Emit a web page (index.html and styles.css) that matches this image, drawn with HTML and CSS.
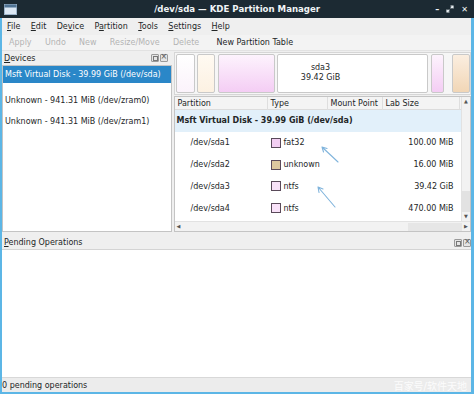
FILE: index.html
```html
<!DOCTYPE html>
<html lang="en">

<head>
    <meta charset="UTF-8">
    <title>/dev/sda — KDE Partition Manager</title>
    <link rel="stylesheet" href="styles.css">
</head>

<body>
    <div class="screen">
        <header class="titlebar">
            <svg class="app-icon" width="13" height="11" viewBox="0 0 13 11">
                <rect x="0.5" y="0.5" width="12" height="10" fill="#dce8f4" stroke="#9fb6cc" />
                <rect x="0.5" y="0.5" width="12" height="3" fill="#4f7394" />
            </svg>
            <span class="title">/dev/sda — KDE Partition Manager</span>
            <div class="win-controls">
                <span>–</span>
                <svg width="8" height="8" viewBox="0 0 8 8">
                    <path d="M4.5 1 H7 V3.5 M7 1 L4.6 3.4 M3.5 7 H1 V4.5 M1 7 L3.4 4.6" fill="none" stroke="#e8eef2" stroke-width="1.2" />
                </svg>
                <span class="close">✕</span>
            </div>
        </header>

        <div class="app">
            <nav class="menubar">
                <span><u>F</u>ile</span>
                <span><u>E</u>dit</span>
                <span>De<u>v</u>ice</span>
                <span>P<u>a</u>rtition</span>
                <span><u>T</u>ools</span>
                <span><u>S</u>ettings</span>
                <span><u>H</u>elp</span>
            </nav>

            <div class="toolbar">
                <span class="tool disabled">Apply</span>
                <span class="tool disabled">Undo</span>
                <span class="tool disabled">New</span>
                <span class="tool disabled">Resize/Move</span>
                <span class="tool disabled">Delete</span>
                <span class="tool">New Partition Table</span>
            </div>

            <div class="workspace">
                <!-- Devices dock -->
                <section class="devices">
                    <div class="dock-title">
                        <span><u>D</u>evices</span>
                        <div class="dock-btns">
                            <span class="dock-btn float"></span>
                            <span class="dock-btn close"></span>
                        </div>
                    </div>
                    <ul class="device-list">
                        <li class="selected">Msft Virtual Disk - 39.99 GiB (/dev/sda)</li>
                        <li>Unknown - 941.31 MiB (/dev/zram0)</li>
                        <li>Unknown - 941.31 MiB (/dev/zram1)</li>
                    </ul>
                </section>

                <!-- Partition view -->
                <section class="partview">
                    <div class="partbar">
                        <div class="seg seg-white" style="width: 19px"></div>
                        <div class="seg seg-beige" style="width: 18px"></div>
                        <div class="seg seg-pink" style="width: 57px"></div>
                        <div class="seg seg-main" style="width: 151px">
                            <span>sda3</span>
                            <span>39.42 GiB</span>
                        </div>
                        <div class="seg seg-pink" style="width: 13px"></div>
                        <div class="seg seg-tan" style="width: 18px"></div>
                    </div>

                    <div class="tree">
                        <div class="tree-main">
                            <div class="tree-head">
                                <span class="col-part">Partition</span>
                                <span class="col-type">Type</span>
                                <span class="col-mount">Mount Point</span>
                                <span class="col-size">Lab Size</span>
                            </div>
                            <div class="disk-row">Msft Virtual Disk - 39.99 GiB (/dev/sda)</div>
                            <div class="rows" id="rows"></div>
                            <!-- annotation arrows from the screenshot -->
                            <svg class="arrows" width="30" height="70" viewBox="0 0 30 70">
                                <path d="M23 20 L7 5 M7 5 L8.5 10 M7 5 L12 6.5" fill="none" stroke="#80b4dc" stroke-width="1.1" stroke-linecap="round" />
                                <path d="M20 65 L3 45 M3 45 L4 50.5 M3 45 L8 47" fill="none" stroke="#80b4dc" stroke-width="1.1" stroke-linecap="round" />
                            </svg>
                        </div>
                        <div class="vscroll">
                            <span class="arrow">▲</span>
                            <span class="vthumb"></span>
                            <span class="arrow">▼</span>
                        </div>
                        <div class="hscroll">
                            <span class="arrow">◀</span>
                            <span class="hthumb"></span>
                            <span class="arrow">▶</span>
                        </div>
                    </div>
                </section>
            </div>

            <!-- Pending operations dock -->
            <section class="pending">
                <div class="dock-title">
                    <span><u>P</u>ending Operations</span>
                    <div class="dock-btns">
                        <span class="dock-btn float"></span>
                        <span class="dock-btn close"></span>
                    </div>
                </div>
                <div class="pending-body"></div>
            </section>

            <footer class="statusbar">
                <span>0 pending operations</span>
                <span class="watermark">百家号/软件天地</span>
            </footer>
        </div>
    </div>

    <script>
        const partitions = [
            { name: "/dev/sda1", type: "fat32", color: "#f2cef2", size: "100.00 MiB" },
            { name: "/dev/sda2", type: "unknown", color: "#dcc79f", size: "16.00 MiB" },
            { name: "/dev/sda3", type: "ntfs", color: "#f9e2f9", size: "39.42 GiB" },
            { name: "/dev/sda4", type: "ntfs", color: "#f9e2f9", size: "470.00 MiB" }
        ];

        function displayPartitions() {
            const rows = document.getElementById("rows");
            partitions.forEach(p => {
                const row = document.createElement("div");
                row.classList.add("part-row");
                row.innerHTML = `
                    <span class="col-part">${p.name}</span>
                    <span class="col-type"><i class="swatch" style="background: ${p.color}"></i>${p.type}</span>
                    <span class="col-mount"></span>
                    <span class="col-size">${p.size}</span>
                `;
                rows.appendChild(row);
            });
        }

        displayPartitions();
    </script>
</body>

</html>
```

FILE: styles.css
```css
* {
    margin: 0;
    padding: 0;
    box-sizing: border-box;
    font-family: 'DejaVu Sans', 'Noto Sans CJK SC', sans-serif;
}

body {
    background: #5cb6e6;
    font-size: 8px;
    color: #232627;
}

.screen {
    width: 474px;
    height: 394px;
    overflow: hidden;
    background: #5cb6e6;
}

u {
    text-decoration-thickness: 1px;
    text-underline-offset: 1px;
}

/* Title bar */
.titlebar {
    height: 18px;
    background: #1c2a33;
    color: #f0f4f6;
    display: flex;
    align-items: center;
    padding: 0 6px 0 4px;
}

.app-icon {
    display: block;
}

.title {
    flex: 1;
    text-align: center;
    font-weight: bold;
    font-size: 8.6px;
    padding-left: 22px;
}

.win-controls {
    display: flex;
    align-items: center;
    gap: 7px;
    font-size: 8px;
    font-weight: bold;
}

/* Main window */
.app {
    margin-left: 2px;
    width: 469px;
    height: 374px;
    background: #efefef;
    display: flex;
    flex-direction: column;
}

.menubar {
    height: 17px;
    display: flex;
    align-items: center;
    gap: 10.4px;
    padding-left: 5px;
    background: #efefef;
}

.toolbar {
    height: 16px;
    display: flex;
    align-items: center;
    gap: 13.3px;
    padding-left: 7px;
    background: #f3f3f3;
    border-bottom: 1px solid #e2e2e2;
}

.tool.disabled {
    color: #b4b4b4;
}

.toolbar .tool:last-child {
    margin-left: 4px;
}

.workspace {
    height: 183px;
    display: flex;
    gap: 2px;
    padding-bottom: 2px;
}

/* Docks */
.dock-title {
    height: 14px;
    display: flex;
    align-items: center;
    justify-content: space-between;
    padding: 0 2px;
}

.dock-btns {
    display: flex;
    gap: 1px;
}

.dock-btn {
    width: 8px;
    height: 8px;
    border: 1px solid #9a9a9a;
    border-radius: 1px;
    background: #e4e4e4;
    position: relative;
}

.dock-btn.float::after {
    content: "";
    position: absolute;
    left: 1px;
    top: 1px;
    width: 3px;
    height: 3px;
    border: 1px solid #777;
}

.dock-btn.close::after {
    content: "×";
    position: absolute;
    left: 0;
    top: -3px;
    font-size: 8px;
    color: #555;
}

.devices {
    width: 172px;
    display: flex;
    flex-direction: column;
}

.devices .dock-title {
    padding-right: 4px;
}

.device-list {
    flex: 1;
    list-style: none;
    background: #fff;
    border: 1px solid #c4c4c4;
}

.device-list li {
    height: 21px;
    line-height: 21px;
    padding-left: 2px;
    white-space: nowrap;
}

.device-list li.selected {
    height: 17px;
    line-height: 17px;
    margin-bottom: 7px;
    background: #2a87c8;
    color: #fff;
}

/* Partition view */
.partview {
    flex: 1;
    display: flex;
    flex-direction: column;
    gap: 1px;
    padding-top: 1px;
}

.partbar {
    height: 43px;
    display: flex;
    gap: 2.5px;
    padding: 1px 0 1px 1px;
    background: #f6f6f6;
    border: 1px solid #d6d6d6;
    overflow: hidden;
}

.seg {
    flex: none;
    border: 1px solid #c9c9c9;
    border-radius: 2px;
}

.seg-white {
    background: linear-gradient(#ffffff, #fbf3fb);
}

.seg-beige {
    background: linear-gradient(#fffaf2, #fcf1e2);
}

.seg-pink {
    background: linear-gradient(#fdf3fd, #f4cdf4);
}

.seg-tan {
    margin-left: 6px;
    background: linear-gradient(#fbeee0, #f1d6b6);
}

.seg-main {
    background: #fff;
    display: flex;
    flex-direction: column;
    align-items: center;
    justify-content: center;
    padding-right: 64px;
    line-height: 10px;
    padding-bottom: 2px;
}

.tree {
    height: 136px;
    display: grid;
    grid-template-columns: 1fr 9px;
    grid-template-rows: 1fr 10px;
    background: #fff;
    border: 1px solid #c4c4c4;
}

.tree-main {
    position: relative;
    overflow: hidden;
}

.tree-head {
    height: 13px;
    display: flex;
    align-items: center;
    background: #f4f4f4;
    border-bottom: 1px solid #dcdcdc;
}

.tree-head span {
    height: 13px;
    line-height: 13px;
    padding-left: 3px;
    border-right: 1px solid #dedede;
}

.col-part {
    width: 93px;
}

.col-type {
    width: 60px;
    display: flex;
    align-items: center;
}

.col-mount {
    width: 55px;
}

.col-size {
    width: 77px;
}

.disk-row {
    height: 22px;
    line-height: 22px;
    padding-left: 2px;
    font-weight: bold;
    background: #e2f0fa;
    white-space: nowrap;
}

.part-row {
    height: 21.75px;
    display: flex;
    align-items: center;
}

.part-row .col-part {
    padding-left: 16px;
}

.part-row .col-type {
    padding-left: 3px;
}

.part-row .col-size {
    width: 68px;
    text-align: right;
    margin-left: 3px;
}

.swatch {
    width: 10px;
    height: 10px;
    border: 1px solid #5a4a5a;
    margin-right: 3px;
    flex: none;
}

.arrows {
    position: absolute;
    left: 140px;
    top: 45px;
}

.vscroll {
    display: flex;
    flex-direction: column;
    background: #f2f2f2;
    border-left: 1px solid #e2e2e2;
}

.vthumb {
    flex: 1;
    margin-top: 85px;
    background: #e2e2e2;
}

.hscroll {
    grid-column: 1 / 3;
    display: flex;
    align-items: center;
    background: #f2f2f2;
    border-top: 1px solid #e2e2e2;
}

.hthumb {
    margin-left: auto;
    width: 54px;
    height: 8px;
    background: #e6e6e6;
}

.arrow {
    font-size: 5px;
    color: #555;
    width: 8px;
    height: 9px;
    line-height: 9px;
    text-align: center;
}

/* Pending operations */
.pending {
    flex: 1;
    display: flex;
    flex-direction: column;
}

.pending .dock-title {
    height: 16px;
    padding-top: 2px;
    border-bottom: 1px solid #d4d4d4;
    padding-right: 0;
}

.pending-body {
    flex: 1;
    background: #fff;
}

.statusbar {
    height: 15px;
    display: flex;
    align-items: center;
    justify-content: space-between;
    padding-right: 4px;
    background: #ececec;
    border-top: 1px solid #d8d8d8;
}

.watermark {
    color: rgba(255, 255, 255, 0.85);
    font-size: 10px;
}
```
